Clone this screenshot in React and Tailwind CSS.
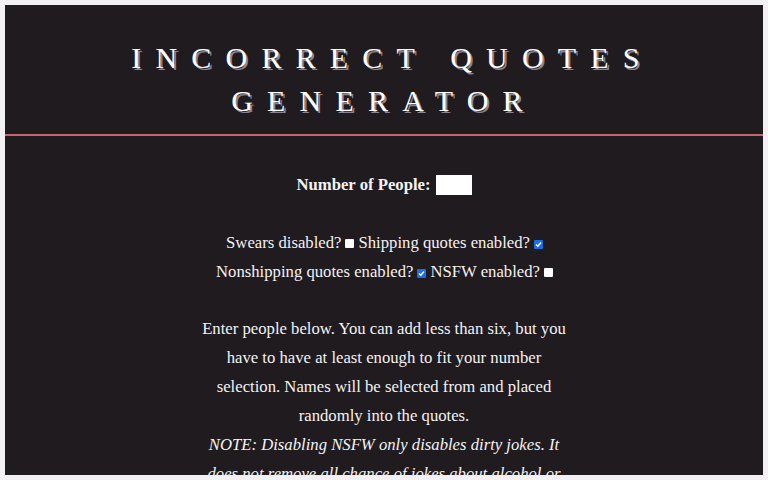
import React from "react";

function Box({ checked }) {
  return checked ? (
    <span className="inline-flex h-[9px] w-[9px] items-center justify-center rounded-[1px] bg-[#1a6fe8] align-[0px] mx-[4px]">
      <svg width="7" height="7" viewBox="0 0 7 7">
        <path d="M1 3.6 L2.8 5.3 L6 1.5" fill="none" stroke="white" strokeWidth="1.4" />
      </svg>
    </span>
  ) : (
    <span className="inline-block h-[9px] w-[9px] rounded-[1px] bg-white align-[0px] mx-[4px]" />
  );
}

export default function App() {
  return (
    <div className="h-screen bg-[#f2f0f3] p-[5px]" style={{ fontFamily: '"Liberation Serif", serif' }}>
      <div className="h-full overflow-hidden bg-[#1f1b1f] text-[#f4f2f4]">
        <header className="border-b-2 border-[#c4646f] pt-[31px] pb-[12px] text-center">
          <h1
            className="mx-auto text-[30px] leading-[43px] tracking-[14.2px] text-white"
            style={{ textShadow: "2px 2px 0 #8a8590" }}
          >
            <span className="block pl-[17px]">INCORRECT QUOTES</span>
            <span className="block">GENERATOR</span>
          </h1>
        </header>
        <main className="flex flex-col items-center pt-[34px] text-[16.7px] leading-[29px]">
          <div className="flex items-center gap-[5px] font-bold">
            <span>Number of People:</span>
            <span className="h-[20px] w-[36px] bg-white" />
          </div>
          <div className="mt-[29px] pl-[5px] text-center">
            <div>
              Swears disabled?<Box />Shipping quotes enabled?<Box checked />
            </div>
            <div>
              Nonshipping quotes enabled?<Box checked />NSFW enabled?<Box />
            </div>
          </div>
          <div className="mt-[28px] w-[372px] text-center">
            <p>
              Enter people below. You can add less than six, but you have to have at least enough to fit
              your number selection. Names will be selected from and placed randomly into the quotes.
            </p>
            <p className="italic">
              NOTE: Disabling NSFW only disables dirty jokes. It does not remove all chance of jokes about
              alcohol or drugs.
            </p>
          </div>
        </main>
      </div>
    </div>
  );
}
